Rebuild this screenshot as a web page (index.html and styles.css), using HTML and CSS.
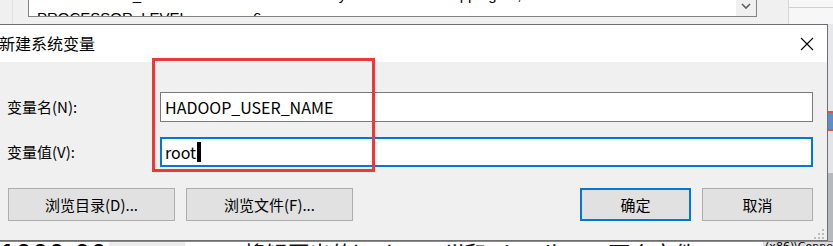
FILE: index.html
```html
<!DOCTYPE html>
<html lang="zh-CN">
<head>
<meta charset="utf-8">
<title>新建系统变量</title>
<link rel="stylesheet" href="styles.css">
</head>
<body>
<div class="desk">
  <div class="top-bg">
    <div class="tb-left"><div class="tb-rule"></div></div>
    <div class="listbox">
      <div class="rows">
        <div class="row"><span class="c1">PROCESSOR_IDENTIFIER</span><span class="c2">Intel64 Family 6 Model 158 Stepping 10, GenuineIntel</span></div>
        <div class="row"><span class="c1">PROCESSOR_LEVEL</span><span class="c2">6</span></div>
      </div>
      <div class="scroll-arrow">
        <svg width="12" height="8" viewBox="0 0 12 8"><path d="M2 2 L6 6 L10 2" fill="none" stroke="#606060" stroke-width="1.6"/></svg>
      </div>
    </div>
    <div class="tb-gap"></div>
    <div class="tb-right"><div class="tb-line"></div></div>
  </div>

  <div class="mid">
    <div class="dialog">
      <div class="titlebar">
        <span class="title">新建系统变量</span>
        <svg class="close" width="14" height="14" viewBox="0 0 14 14"><path d="M1 1 L13 13 M13 1 L1 13" stroke="#000" stroke-width="1.1" fill="none"/></svg>
      </div>
      <div class="body">
        <div class="field">
          <label class="lbl">变量名(N):</label>
          <div class="input">HADOOP_USER_NAME</div>
        </div>
        <div class="field">
          <label class="lbl">变量值(V):</label>
          <div class="input focus">root<span class="caret"></span></div>
        </div>
        <div class="buttons">
          <div class="btn wide">浏览目录(D)...</div>
          <div class="btn wide">浏览文件(F)...</div>
          <div class="spacer"></div>
          <div class="btn narrow default">确定</div>
          <div class="btn narrow">取消</div>
        </div>
        <svg class="grip" width="12" height="12" viewBox="0 0 12 12">
          <rect x="9" y="1" width="2" height="2" fill="#bcbcbc"/>
          <rect x="5" y="5" width="2" height="2" fill="#bcbcbc"/>
          <rect x="9" y="5" width="2" height="2" fill="#bcbcbc"/>
          <rect x="1" y="9" width="2" height="2" fill="#bcbcbc"/>
          <rect x="5" y="9" width="2" height="2" fill="#bcbcbc"/>
          <rect x="9" y="9" width="2" height="2" fill="#bcbcbc"/>
        </svg>
      </div>
    </div>
    <div class="right-bg">
      <div class="rb-a"></div>
      <div class="rb-red"></div>
      <div class="rb-blue"></div>
      <div class="rb-red"></div>
      <div class="rb-b"></div>
      <div class="rb-dark"></div>
    </div>
  </div>

  <div class="bottom-bg">
    <div class="bb-num">1000.00</div>
    <div class="bb-gray"></div>
    <div class="bb-text">将解压出的hadoop.dll和winutils.exe两个文件</div>
    <div class="bb-right">(x86)\Conne</div>
  </div>
</div>
<div class="annot"></div>
</body>
</html>
```

FILE: styles.css
```css
* { box-sizing: border-box; }
html, body { margin: 0; padding: 0; }
body {
  width: 833px;
  height: 246px;
  overflow: hidden;
  position: relative;
  background: #f0f0f0;
  font-family: "Noto Sans CJK SC", sans-serif;
  color: #000;
}
.desk {
  display: flex;
  flex-direction: column;
  width: 833px;
  height: 246px;
}

/* ---------- top background window ---------- */
.top-bg {
  height: 24px;
  display: flex;
  background: #f0f0f0;
  flex: none;
}
.tb-left {
  width: 28px;
  display: flex;
  padding-left: 12px;
}
.tb-rule { width: 1px; background: #e2e2e2; }
.listbox {
  width: 729px;
  height: 17px;
  background: #fff;
  border-left: 1px solid #828282;
  border-right: 1px solid #828282;
  border-bottom: 1px solid #828282;
  display: flex;
  overflow: hidden;
  position: relative;
}
.rows {
  flex: 1;
  margin-top: -17px;
  font-family: "Liberation Sans", sans-serif;
  font-size: 15px;
}
.row {
  height: 23px;
  line-height: 23px;
  display: flex;
  padding-left: 8px;
  white-space: nowrap;
}
.c1 { width: 216px; flex: none; }
.scroll-arrow {
  width: 20px;
  background: #f0f0f0;
  display: flex;
  justify-content: center;
  padding-top: 2px;
}
.tb-gap { width: 31px; }
.tb-right {
  flex: 1;
  border-left: 1px solid #d6d6d6;
  background: #f7f7f7;
  padding-top: 7px;
}
.tb-line { height: 1px; background: #cfcfcf; }

/* ---------- middle ---------- */
.mid {
  display: flex;
  height: 217px;
  flex: none;
}
.dialog {
  width: 828px;
  height: 217px;
  border-top: 1px solid #6f6f6f;
  border-right: 1px solid #6f6f6f;
  border-bottom: 1px solid #6f6f6f;
  display: flex;
  flex-direction: column;
  background: #f0f0f0;
}
.titlebar {
  height: 37px;
  background: #fff;
  display: flex;
  align-items: center;
  justify-content: space-between;
  padding-right: 13px;
  flex: none;
}
.title {
  font-size: 16px;
  margin-left: -1px;
  padding-bottom: 1px;
}
.body {
  flex: 1;
  position: relative;
  padding: 30px 14px 0 7px;
  display: flex;
  flex-direction: column;
}
.field {
  display: flex;
  align-items: center;
  height: 30px;
  margin-bottom: 15px;
}
.lbl {
  width: 153px;
  font-size: 15px;
  flex: none;
  padding-bottom: 1px;
}
.input {
  flex: 1;
  height: 30px;
  background: #fff;
  border: 1px solid #7a7a7a;
  font-size: 16px;
  padding-left: 4px;
  display: flex;
  align-items: center;
  white-space: nowrap;
}
.input.focus {
  border: 2px solid #0078d7;
  padding-left: 3px;
}
.caret {
  display: inline-block;
  width: 4px;
  height: 20px;
  background: #000;
  margin-left: 1px;
}
.buttons {
  display: flex;
  gap: 11px;
  margin-top: 6px;
  padding-left: 1px;
}
.spacer { flex: 1; }
.btn {
  height: 33px;
  background: #e1e1e1;
  border: 1px solid #adadad;
  font-size: 15px;
  display: flex;
  align-items: center;
  justify-content: center;
  padding-bottom: 1px;
}
.btn.wide { width: 167px; }
.btn.narrow { width: 111px; }
.btn.default { border: 2px solid #0078d7; }
.grip {
  position: absolute;
  right: 2px;
  bottom: 0px;
}

/* right background sliver */
.right-bg {
  flex: 1;
  display: flex;
  flex-direction: column;
  background: #d9dde2;
}
.rb-a { height: 87px; background: #e6e8eb; }
.rb-red { height: 2px; background: #d9534f; }
.rb-blue { height: 16px; background: #5b8fc7; }
.rb-b { height: 42px; background: #e2e4e7; }
.rb-dark { flex: 1; background: #b5b8bd; }

/* ---------- bottom background ---------- */
.bottom-bg {
  flex: 1;
  display: flex;
  background: #fff;
  overflow: hidden;
  border-top: 1px solid #8a8a8a;
}
.bb-num {
  width: 110px;
  font-family: "Liberation Sans", sans-serif;
  font-weight: bold;
  font-size: 26px;
  line-height: 26px;
  margin-top: -2px;
  letter-spacing: 2px;
}
.bb-gray { width: 77px; background: #ebebeb; }
.bb-text {
  width: 584px;
  padding-left: 58px;
  font-size: 22px;
  line-height: 26px;
  white-space: nowrap;
  overflow: hidden;
  margin-top: -3px;
  color: #111;
}
.bb-right {
  flex: 1;
  background: #dcdcdc;
  font-family: "DejaVu Sans", sans-serif;
  font-size: 11px;
  line-height: 12px;
  padding-left: 2px;
  margin-top: -1px;
  white-space: nowrap;
}

/* ---------- red annotation rectangle ---------- */
.annot {
  position: absolute;
  left: 152px;
  top: 58px;
  width: 223px;
  height: 114px;
  border: 3px solid #ef3737;
}
```
